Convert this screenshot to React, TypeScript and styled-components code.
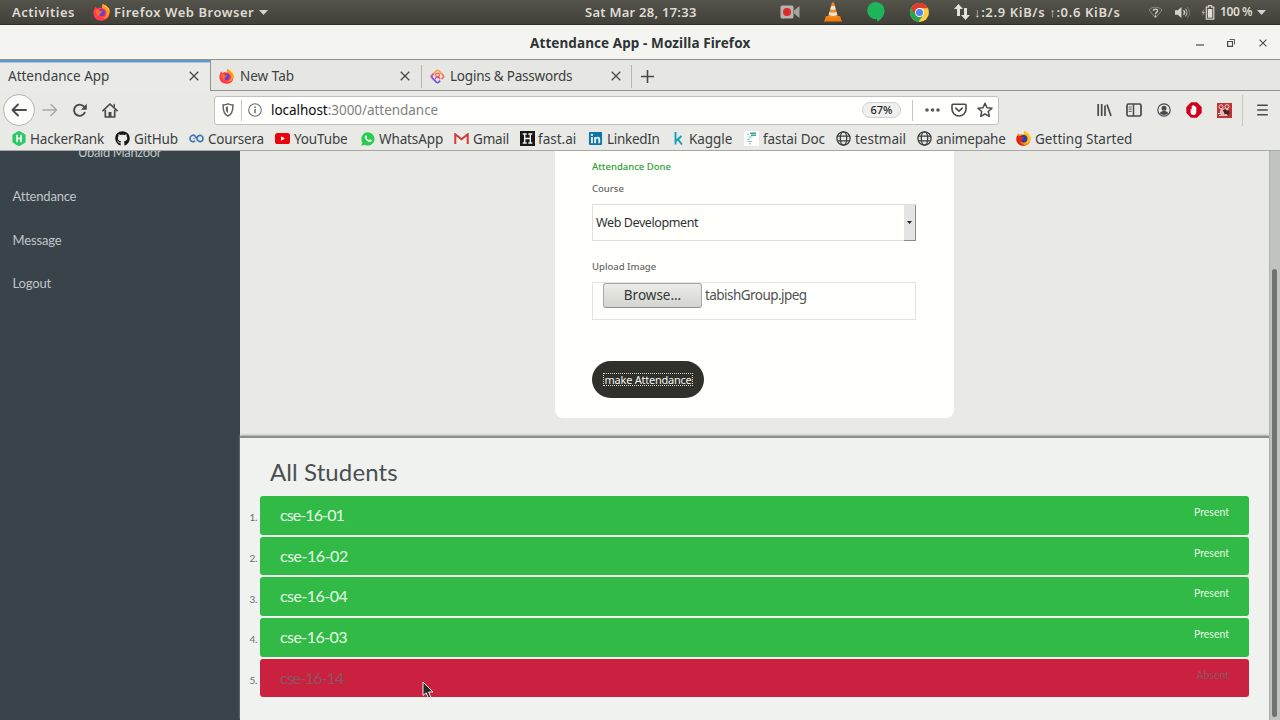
import React from "react";
import styled, { createGlobalStyle, css } from "styled-components";
import { FaGithub, FaLinkedin } from "react-icons/fa";

const Global = createGlobalStyle`
  *, *::before, *::after { box-sizing: border-box; }
  body { margin: 0; overflow: hidden; font-family: "Noto Sans", "Open Sans", sans-serif; }
  svg { display: block; flex: none; }
`;

const Screen = styled.div`
  width: 1280px;
  height: 720px;
  display: flex;
  flex-direction: column;
  overflow: hidden;
  background: #e9eae6;
`;

const Label = styled.span<{ $w?: number; $size?: number; $track?: number; $gap?: number }>`
  display: block;
  flex: none;
  white-space: pre;
  ${(p) => p.$w !== undefined && css`width: ${p.$w}px;`}
  margin-left: ${(p) => p.$gap ?? 0}px;
  font-size: ${(p) => p.$size ?? 14}px;
  letter-spacing: ${(p) => p.$track ?? 0}px;
`;

const Slot = styled.span<{ $w: number; $gap?: number }>`
  display: flex;
  flex: none;
  justify-content: center;
  align-items: center;
  width: ${(p) => p.$w}px;
  margin-left: ${(p) => p.$gap ?? 0}px;
`;

/* ---------- desktop panel ---------- */

const Panel = styled.header`
  height: 25px;
  flex: none;
  display: flex;
  align-items: center;
  color: #dfdbd2;
  font-weight: 600;
  line-height: 24px;
  background: linear-gradient(#55544b, #403f39);
  border-bottom: 1px solid #33322d;
`;

const TitleBar = styled.div`
  height: 35px;
  flex: none;
  display: flex;
  align-items: center;
  padding-top: 1px;
  color: #2e3436;
  font-weight: 700;
  background: #f4f4f1;
  border-bottom: 1px solid #92938e;
`;

/* ---------- browser chrome ---------- */

const TabStrip = styled.div`
  height: 31px;
  flex: none;
  display: flex;
  background: #e6e7e2;
  color: #3b4042;
`;

const Tab = styled.div<{ $active?: boolean; $w: number }>`
  width: ${(p) => p.$w}px;
  flex: none;
  display: flex;
  align-items: center;
  padding: 2px 0 0 8px;
  border-bottom: 1px solid #92938e;
  ${(p) =>
    p.$active &&
    css`
      background: #eaebe7;
      border-bottom: 0;
      border-top: 2px solid #6598ca;
      border-right: 1px solid #92938e;
      padding: 0 0 1px 8px;
      box-shadow: inset 0 1px #a9c4df;
    `}
`;

const TabRest = styled.div`
  flex: 1;
  display: flex;
  align-items: center;
  padding-top: 2px;
  border-bottom: 1px solid #92938e;
`;

const TabDivider = styled.span`
  width: 1px;
  height: 23px;
  background: #b5b6b2;
`;

const NavBar = styled.div`
  height: 36px;
  flex: none;
  display: flex;
  align-items: center;
  padding: 2px 0 0 3px;
  background: #e9eae6;
`;

const BackButton = styled.span`
  width: 32px;
  height: 32px;
  flex: none;
  display: flex;
  align-items: center;
  justify-content: center;
  border: 1px solid #b3b4b0;
  border-radius: 50%;
  background: #fbfbf9;
`;

const UrlBar = styled.div`
  width: 785px;
  height: 29px;
  flex: none;
  display: flex;
  align-items: center;
  margin-left: 96px;
  background: #fffffd;
  border: 1px solid #c0c1bd;
  border-radius: 3px;
`;

const Rule = styled.span<{ $gap: number; $h?: number }>`
  width: 1px;
  flex: none;
  height: ${(p) => p.$h ?? 21}px;
  margin-left: ${(p) => p.$gap}px;
  background: #c6c7c3;
`;

const Host = styled.b`
  font-weight: 400;
  color: #0c0c0d;
`;

const Url = styled(Label)`
  color: #808281;
`;

const Zoom = styled.span`
  width: 39px;
  height: 16px;
  flex: none;
  margin-left: 424px;
  border: 1px solid #d0d1cf;
  border-radius: 8px;
  background: #f0f0ee;
  color: #222;
  font-size: 11px;
  font-weight: 500;
  line-height: 14px;
  letter-spacing: 0;
  text-align: center;
`;

const Bookmarks = styled.div`
  height: 24px;
  flex: none;
  display: flex;
  padding-left: 11px;
  color: #3b4042;
  border-bottom: 1px solid #a7a8a5;
`;

const Bookmark = styled.div<{ $w: number }>`
  width: ${(p) => p.$w}px;
  flex: none;
  display: flex;
  align-items: center;
  line-height: 22px;
`;

/* ---------- page ---------- */

const Page = styled.div`
  flex: 1;
  min-height: 0;
  display: flex;
`;

const Sidebar = styled.nav`
  width: 240px;
  flex: none;
  background: #38434a;
  color: #c0c5c6;
  font-family: Lato, sans-serif;
  font-size: 13px;
  line-height: 16px;
`;

const UserName = styled.div`
  height: 9px;
  overflow: hidden;
  display: flex;
  align-items: flex-end;
  padding-left: 78px;
  letter-spacing: -0.35px;
`;

const MenuItem = styled.a<{ $top: number; $track: number }>`
  display: block;
  margin: ${(p) => p.$top}px 0 0 12.5px;
  letter-spacing: ${(p) => p.$track}px;
`;

const Main = styled.main`
  width: 1029px;
  flex: none;
  display: flex;
  flex-direction: column;
`;

const FormArea = styled.section`
  height: 285px;
  flex: none;
  background: #e9eae6;
`;

const Card = styled.form`
  width: 399px;
  height: 267px;
  margin-left: 315px;
  padding: 9px 37px 0;
  background: #fffffc;
  border-radius: 0 0 8px 8px;
`;

const FieldLabel = styled.label<{ $top: number; $green?: boolean; $track?: number }>`
  display: block;
  height: 13px;
  margin-top: ${(p) => p.$top}px;
  font-size: 9.5px;
  font-weight: 500;
  line-height: 13px;
  letter-spacing: ${(p) => p.$track ?? 0}px;
  color: ${(p) => (p.$green ? "#2f9d39" : "#666867")};
`;

const Select = styled.div`
  width: 324px;
  height: 37px;
  margin-top: 9px;
  display: flex;
  align-items: center;
  justify-content: space-between;
  padding-left: 3px;
  border: 1px solid #dededc;
  border-right: 0;
  color: #303232;
`;

const SelectButton = styled.span`
  width: 12px;
  height: 36px;
  display: flex;
  align-items: center;
  justify-content: center;
  background: #e4e5e2;
  border-right: 1px solid #8c8d8a;
  border-bottom: 1px solid #8c8d8a;
`;

const FileBox = styled.div`
  width: 324px;
  height: 38px;
  margin-top: 9px;
  display: flex;
  align-items: flex-start;
  padding-left: 10px;
  border: 1px solid #e2e2e0;
  color: #505353;
  line-height: 25px;
`;

const Browse = styled.span`
  width: 99px;
  height: 25px;
  display: flex;
  justify-content: center;
  line-height: 22px;
  color: #333839;
  border: 1px solid #a9aaa6;
  border-bottom-color: #8f908d;
  border-radius: 3px;
  background: linear-gradient(#ebebe8, #d4d5d1);
`;

const Submit = styled.span`
  width: 112px;
  height: 37px;
  margin-top: 41px;
  display: flex;
  align-items: center;
  justify-content: center;
  border-radius: 19px;
  background: #31312c;
  color: #f4f4f0;
  line-height: 11px;
`;

const FocusRing = styled.span`
  width: 90px;
  height: 13px;
  display: flex;
  justify-content: center;
  border: 1px dotted #d8d8d4;
`;

const Students = styled.section`
  flex: 1;
  position: relative;
  padding: 18px 20px 0;
  background: #f0f2f0;
  border-top: 2px solid #8b8e8b;
  box-shadow: 0 -1px 2px #a6a8a4;
  font-family: Lato, sans-serif;
`;

const Heading = styled.h1`
  margin: 0 0 8px 10px;
  height: 32px;
  font-size: 24px;
  font-weight: 400;
  line-height: 32px;
  letter-spacing: 0.1px;
  color: #4a4f50;
`;

const Entry = styled.div`
  display: flex;
  align-items: center;
  height: 38.7px;
  margin: 0 0 2px -12px;
`;

const Index = styled.span`
  width: 12px;
  flex: none;
  display: flex;
  justify-content: flex-end;
  padding: 4px 3px 0 0;
  font-size: 10px;
  line-height: 12px;
  letter-spacing: -0.3px;
  white-space: nowrap;
  color: #6a6e6e;
`;

const Row = styled.div<{ $absent?: boolean }>`
  flex: 1;
  height: 100%;
  display: flex;
  justify-content: space-between;
  padding: 0 20px;
  border-radius: 3px;
  background: ${(p) => (p.$absent ? "#ca2140" : "#32ba46")};
  color: ${(p) => (p.$absent ? "#8d5560" : "#e4f8e6")};
`;

const Roll = styled.span<{ $track: number }>`
  font-size: 16px;
  line-height: 38px;
  letter-spacing: ${(p) => p.$track}px;
`;

const Status = styled.span`
  font-size: 10.5px;
  line-height: 33.5px;
`;

const Scrollbar = styled.div`
  width: 11px;
  background: linear-gradient(90deg, #aeb0ad 1px, #c1c3c1 1px);
  padding: 118px 0 3px 3px;
`;

const Thumb = styled.div`
  width: 5px;
  height: 100%;
  border-radius: 3px;
  background: #6f726f;
`;

const Pointer = styled.div`
  position: absolute;
  left: 422px;
  top: 681px;
`;

/* ---------- icons ---------- */

const Caret = () => (
  <svg width="9" height="5" viewBox="0 0 9 5"><path d="M0 0h9L4.500 5z" fill="#d5d2c9" /></svg>
);

const Firefox = ({ size = 16, old = false }: { size?: number; old?: boolean }) => (
  <svg width={size} height={size} viewBox="0 0 16 16">
    <path d="M1 5.200 2.200 2.400 4 4.200 6 3.300 8.200 4l1-4 3.200 3.300 2 1.200C15.900 6.700 15.900 11 13.700 13.500 11 16.400 5 16.600 2.300 13.700.2 11.500 0 8 1 5.200z" fill={old ? "#ff7b16" : "#ff3b4c"} />
    <path d="M9.200 0c0 2.200 1.200 3 2.600 4 2.200 2 2.400 5.600.5 7.600 3-.7 4.200-5 2.600-7.900-.6.100-1-.3-1.300-.8C12.800 1.500 11 .9 9.200 0z" fill="#ffd53d" />
    <path d="M9 4c2.500.5 4 2.500 3.800 5-.3 2.600-2.300 4-4.500 4 3.700 1.500 7-1 7-5 0-2-.7-3.400-1.700-4.300L9.200 0C8 1.500 8 3 9 4z" fill={old ? "#ffc21b" : "#ff9c1b"} />
    <circle cx="8" cy="8.300" r={old ? 4 : 3.3} fill={old ? "#1745b5" : "#6b3fd4"} />
    <path d="M2.500 5.500c2-.8 3.400.2 4.200 1.200L9 7 7.300 8.600c-1.300.4-2 1.800-.5 2.700C3.700 12 2.100 8.600 2.500 5.500z" fill={old ? "#e6260f" : "#ff6a2b"} />
    {old && <path d="M1 5.200C0 8 .2 11.500 2.300 13.700c2 2 5.200 2.500 8 1.500C5 15 2.500 10 3 5z" fill="#dd2415" />}
  </svg>
);

const Close = ({ size = 10 }: { size?: number }) => (
  <svg width={size} height={size} viewBox="0 0 10 10" stroke="#45494a" strokeWidth="1.300"><path d="M.7.700l8.600 8.600M9.300.700.7 9.300" /></svg>
);

const Camera = () => (
  <svg width="20" height="14" viewBox="0 0 20 14">
    <rect x=".5" y=".5" width="13" height="13" rx="1.500" fill="#b5b3ae" />
    <path d="M14 5.500 19.500 1v12L14 8.500z" fill="#a5a39e" />
    <circle cx="7" cy="7" r="4" fill="#dc2a2a" />
  </svg>
);

const Cone = () => (
  <svg width="18" height="20" viewBox="0 0 18 20">
    <path d="M2 14h14l2 5.500H0z" fill="#ef7d0c" />
    <path d="M8 .5h2L14 15c-2 1.800-8 1.800-10 0z" fill="#f58a1f" />
    <path d="m7.200 4-.9 3.200c1.500.8 3.900.8 5.400 0L10.800 4zM5.600 9.800l-.8 3c2 1.500 6.400 1.500 8.400 0l-.8-3c-1.600 1.200-5.200 1.200-6.800 0z" fill="#e9e6e0" />
  </svg>
);

const Hangouts = () => (
  <svg width="18" height="20" viewBox="0 0 18 20"><path d="M9 0a8.600 8.600 0 0 1 8.600 8.600c0 5-3.600 9.400-7.600 11.200v-2.700A8.600 8.600 0 1 1 9 0z" fill="#1db45a" /></svg>
);

const Chrome = () => (
  <svg width="19" height="19" viewBox="0 0 20 20">
    <circle cx="10" cy="10" r="10" fill="#ffce43" />
    <path d="M10 10 1.340 5A10 10 0 0 0 9 19.950L14 12.300z" fill="#2ba24c" />
    <path d="M1.340 5a10 10 0 0 1 17.500.400H10L5.700 12.300z" fill="#e23b2e" />
    <circle cx="10" cy="10" r="4.700" fill="#fff" />
    <circle cx="10" cy="10" r="3.700" fill="#4a86f0" />
  </svg>
);

const UpDown = () => (
  <svg width="16" height="16" viewBox="0 0 16 16" fill="#e4e1d8"><path d="M4.500 0 9 5H6v7H3V5H0zM11.500 16 7 11h3V4h3v7h3z" /></svg>
);

const Wifi = () => (
  <svg width="15" height="13" viewBox="0 0 15 13" fill="none" stroke="#8e8b83">
    <path d="M1 4C4.500.3 10.500.3 14 4L7.500 12z" />
    <path d="M5.500 5c0-2.600 4.300-2.500 4 0-.2 1.400-2 1.300-2 3.200M7.500 9.300v1.600" stroke="#d5d2c9" strokeWidth="1.400" />
  </svg>
);

const Volume = () => (
  <svg width="15" height="13" viewBox="0 0 15 13" fill="none" stroke="#d5d2c9">
    <path d="M0 4.200h2.800L6.500 1v11L2.800 8.800H0z" fill="#d5d2c9" stroke="none" />
    <path d="M8.500 4.300c1.200 1.200 1.200 3.200 0 4.400" strokeWidth="1.300" />
    <path d="M10.300 2.600c2.200 2.200 2.200 5.600 0 7.800" stroke="#aaa79f" strokeWidth="1.200" />
    <path d="M12.200 1c3 3 3 8 0 11" stroke="#7e7c74" />
  </svg>
);

const Battery = () => (
  <svg width="14" height="15" viewBox="0 0 14 15">
    <path d="M3 4 .5 8H2l-.5 3L4 7H2.500z" fill="#aaa79f" />
    <path d="M7.500.7h3v1.500h2.300v12H5.300v-12h2.200z" fill="none" stroke="#d5d2c9" strokeWidth="1.200" />
    <path d="M6.800 4h4.500v8.700H6.800z" fill="#e0ddd4" />
  </svg>
);

const LoginsIcon = () => (
  <svg width="15" height="15" viewBox="0 0 15 15" fill="none" strokeWidth="1.700">
    <path d="M3 5.200 6.300 1.900q1.200-1.100 2.400 0L12 5.200" stroke="#ffa04a" />
    <path d="m12 5 1 1.300q1.100 1.200 0 2.400L11.500 10" stroke="#ff6a60" />
    <path d="M3.300 5 2 6.300Q.8 7.500 2 8.700l4.300 4.400q1.200 1 2.400 0l1.500-1.500" stroke="#6a55e6" />
    <path d="M3.300 5 2 6.300Q.8 7.500 2 8.700" stroke="#f0459a" />
    <circle cx="7.500" cy="6" r="1.800" stroke="#f2564b" strokeWidth="1.200" />
    <path d="M5.200 10.300c0-3 4.600-3 4.600 0" stroke="#e0487e" strokeWidth="1.200" />
  </svg>
);

const ink = "#484b4b";

const Arrow = ({ flip = false }: { flip?: boolean }) => (
  <svg width="16" height="14" viewBox="0 0 16 14" fill="none" stroke={flip ? "#a9aaa8" : ink} strokeWidth={flip ? 1.5 : 1.9} strokeLinecap="round" strokeLinejoin="round">
    <path d={flip ? "M1 7h13.500M9 1.500 14.500 7 9 12.500" : "M15 7H1.500M7 1.500 1.500 7 7 12.500"} />
  </svg>
);

const Reload = () => (
  <svg width="16" height="15" viewBox="0 0 16 15">
    <path d="M12.700 9.700A5.600 5.600 0 1 1 12 3.700" fill="none" stroke={ink} strokeWidth="1.900" strokeLinecap="round" />
    <path d="M14.800.7v6H8.900z" fill={ink} />
  </svg>
);

const Home = () => (
  <svg width="16" height="15" viewBox="0 0 16 15" fill="none" stroke={ink} strokeLinejoin="round" strokeLinecap="round">
    <path d="M1 7.700 8 1l7 6.700" strokeWidth="1.700" />
    <path d="M12.300 3.500V1.500" strokeWidth="1.400" />
    <path d="M3.300 7.500V14h9.400V7.500" strokeWidth="1.700" />
    <path d="M6.500 9h3v5h-3z" fill={ink} stroke="none" />
  </svg>
);

const Shield = () => (
  <svg width="12" height="14" viewBox="0 0 12 14" fill="none" stroke="#606363">
    <path d="M6 .9c1.700.8 3.300 1 5 1C11 7 10.300 11.200 6 13 1.700 11.200 1 7 1 1.900c1.700 0 3.300-.2 5-1z" strokeWidth="1.500" />
    <path d="M6 3.500c-.9.300-1.500.5-2.300.5.100 3.300.6 5.200 2.300 6.300z" fill="#606363" stroke="none" />
  </svg>
);

const Info = () => (
  <svg width="14" height="14" viewBox="0 0 14 14" fill="none" stroke="#6d7070">
    <circle cx="7" cy="7" r="6.300" strokeWidth="1.100" />
    <path d="M7 6v4.300M7 3.500v1.400" strokeWidth="1.500" />
  </svg>
);

const Dots = () => (
  <svg width="15" height="4" viewBox="0 0 15 4" fill="#58595a"><circle cx="2" cy="2" r="1.800" /><circle cx="7.500" cy="2" r="1.800" /><circle cx="13" cy="2" r="1.800" /></svg>
);

const Pocket = () => (
  <svg width="16" height="14" viewBox="0 0 16 14" fill="none" stroke={ink} strokeWidth="1.600" strokeLinecap="round" strokeLinejoin="round">
    <path d="M2 1.200h12q1 0 1 1V6a7 7 0 0 1-14 0V2.200q0-1 1-1z" />
    <path d="m4.700 5.200 3.300 3 3.300-3" />
  </svg>
);

const Star = () => (
  <svg width="16" height="16" viewBox="0 0 16 16" fill="none" stroke={ink} strokeWidth="1.500" strokeLinejoin="round">
    <path d="m8 1.200 2 4.500 5 .5-3.700 3.300 1 4.900L8 12l-4.300 2.400 1-4.900L1 6.200l5-.5z" />
  </svg>
);

const Library = () => (
  <svg width="15" height="14" viewBox="0 0 15 14" stroke={ink} strokeWidth="1.700"><path d="M1.200 1v12M4.700 1v12M8 2.500V13M10 1.500 14 13" /></svg>
);

const SidebarIcon = () => (
  <svg width="16" height="14" viewBox="0 0 16 14" fill="none" stroke={ink}>
    <rect x="1" y="1" width="14" height="12" rx="1.500" strokeWidth="1.700" />
    <path d="M7.500 1v12" strokeWidth="1.500" /><path d="M2.700 4h3M2.700 6.200h3M2.700 8.400h3" strokeWidth=".9" />
  </svg>
);

const Account = () => (
  <svg width="14" height="14" viewBox="0 0 14 14">
    <circle cx="7" cy="7" r="6.200" fill="none" stroke={ink} strokeWidth="1.200" />
    <circle cx="7" cy="5.200" r="2.500" fill={ink} /><path d="M2.800 10.300c1-2 2.500-2.300 4.200-2.300s3.200.3 4.200 2.300C9.300 12.600 4.700 12.600 2.800 10.300z" fill={ink} />
  </svg>
);

const Blocker = () => (
  <svg width="16" height="16" viewBox="0 0 16 16">
    <path d="M5 .3h6L15.700 5v6L11 15.700H5L.3 11V5z" fill="#d0021b" />
    <path d="M4.600 7.200q.7-.4 1.100.3V4q.6-.7 1.100 0v-.8q.6-.6 1.200 0v.8q.6-.7 1.200 0v1q.6-.7 1.100 0v4.500c0 2.500-1 3.500-2.700 3.500-2 0-2.700-1-3-2.300z" fill="#fff" />
  </svg>
);

const RedAddon = () => (
  <svg width="15" height="15" viewBox="0 0 15 15">
    <rect width="15" height="15" fill="#bf3436" />
    <circle cx="4" cy="3.800" r="2" fill="none" stroke="#edcfcc" /><circle cx="10" cy="3.600" r="2" fill="none" stroke="#edcfcc" />
    <path d="M3 7c2-2 7-2 9 0v4l-2 2H5l-2-2.500z" fill="#e8b8b4" />
    <path d="M5.500 7.500 8 6l2 1.500 2.500-.5L12 9l1.500 2-2-.2.500 2.200-3-2.200-1.500.7L7 9z" fill="#46201f" />
    <path d="M1 10.500h3M2 12.500h3" stroke="#f1d8d6" />
  </svg>
);

const Menu = () => (
  <svg width="11" height="12" viewBox="0 0 11 12" stroke={ink} strokeWidth="1.600" strokeLinecap="round"><path d="M.8 1.200h9.400M.8 6h9.400M.8 10.800h9.400" /></svg>
);

const HackerRank = () => (
  <svg width="14" height="15" viewBox="0 0 14 15">
    <path d="M7 0q.5 0 1 .3l5 2.900q.6.300.6 1v6.600q0 .7-.6 1L8 14.700q-1 .5-2 0l-5-2.900q-.6-.3-.6-1V4.200q0-.7.600-1L6 .3q.5-.3 1-.3z" fill="#2ec866" />
    <path d="M5 3.800v7.400M9 3.800v7.400M5 7.500h4" stroke="#fff" strokeWidth="1.500" />
  </svg>
);

const Coursera = () => (
  <svg width="15" height="9" viewBox="0 0 15 9" fill="none" strokeWidth="1.700">
    <path d="M6 6.700C4.500 8.500 1 7.800 1 4.500S4.700.4 6.200 2.200L9 6.500c1.500 2 5 1.200 5-2S10.500.5 9 2.300L7.800 4" stroke="#3c77b5" />
    <path d="M4 4.500q2 .5 2.800-1" stroke="#6ea3d4" strokeWidth="1" />
  </svg>
);

const Youtube = () => (
  <svg width="15" height="11" viewBox="0 0 15 11"><rect width="15" height="11" rx="2.600" fill="#e8050b" /><path d="m6 3.200 4 2.300-4 2.300z" fill="#fff" /></svg>
);

const WhatsAppIcon = () => (
  <svg width="14" height="14" viewBox="0 0 14 14">
    <path d="M7 .3a6.600 6.600 0 1 1-3.200 12.400L.4 13.700l1-3.300A6.600 6.600 0 0 1 7 .3z" fill="#27ce4d" />
    <path d="M4.600 3.500c.8-.5 1 .3 1.400 1.300.1.600-.5.700-.4 1.200.6 1.100 1.400 1.700 2.400 2.100.5 0 .7-.9 1.200-.8l1.500.8c.2 1-.8 1.900-1.800 1.900C6.500 9.800 3.800 7.300 3.700 5c0-.6.400-1.200.9-1.500z" fill="#fff" />
  </svg>
);

const Gmail = () => (
  <svg width="15" height="11" viewBox="0 0 15 11">
    <rect x="1" y=".5" width="13" height="10" fill="#f2eceb" />
    <path d="M1.300 11V1.300l6.200 5 6.200-5V11" fill="none" stroke="#cf3c36" strokeWidth="2" />
  </svg>
);

const FastAi = () => (
  <svg width="15" height="15" viewBox="0 0 15 15">
    <rect width="15" height="15" fill="#191919" />
    <path d="M2.700 3h4M8.300 3h4M2.700 12h4M8.300 12h4M4.700 3v9M10.300 3v9M4.700 7.500h5.600" stroke="#f2f2f0" strokeWidth="1.400" fill="none" />
  </svg>
);

const Kaggle = () => (
  <svg width="9" height="13" viewBox="0 0 9 13" fill="none" stroke="#189fb8" strokeWidth="1.900"><path d="M1.500 0v12.500M7.500 4 2 9M3.800 7.200 8 12.500" /></svg>
);

const FastaiDoc = () => (
  <svg width="15" height="15" viewBox="0 0 15 15">
    <rect width="15" height="15" fill="#fdfdfb" />
    <path d="M6 2.200h6M7 4.200h5" stroke="#3aa796" strokeWidth="1.500" />
    <path d="M3 3.200h2M4.500 6h4M3 8.300h3M3.500 10.500h4.500M5 12.800h2" stroke="#7cc5b8" strokeWidth="1.100" />
  </svg>
);

const Globe = () => (
  <svg width="15" height="15" viewBox="0 0 15 15" fill="none" stroke="#3c3f3f" strokeWidth="1.300">
    <circle cx="7.500" cy="7.500" r="6.600" /><ellipse cx="7.500" cy="7.500" rx="3.200" ry="6.600" /><path d="M1.300 5.200h12.400M1.300 9.800h12.400" />
  </svg>
);

const bookmarks: { name: string; w: number; track: number; gap?: number; icon: React.ReactNode }[] = [
  { name: "HackerRank", w: 104, track: -0.2, icon: <HackerRank /> },
  { name: "GitHub", w: 74, track: -0.15, icon: <FaGithub size={15} color="#16181a" /> },
  { name: "Coursera", w: 86, track: -0.2, icon: <Coursera /> },
  { name: "YouTube", w: 85, track: -0.15, icon: <Youtube /> },
  { name: "WhatsApp", w: 94, track: -0.12, icon: <WhatsAppIcon /> },
  { name: "Gmail", w: 66, track: -0.2, icon: <Gmail /> },
  { name: "fast.ai", w: 68, track: 0, gap: 3, icon: <FastAi /> },
  { name: "LinkedIn", w: 83, track: -0.3, icon: <FaLinkedin size={15} color="#0b76ad" /> },
  { name: "Kaggle", w: 73, track: -0.05, gap: 3, icon: <Kaggle /> },
  { name: "fastai Doc", w: 92, track: -0.07, icon: <FastaiDoc /> },
  { name: "testmail", w: 81, track: 0, icon: <Globe /> },
  { name: "animepahe", w: 99, track: -0.2, icon: <Globe /> },
  { name: "Getting Started", w: 130, track: 0.02, icon: <Firefox size={15} old /> },
];

const students = [
  { roll: "cse-16-01", status: "Present", track: -0.9 },
  { roll: "cse-16-02", status: "Present", track: -0.48 },
  { roll: "cse-16-04", status: "Present", track: -0.53 },
  { roll: "cse-16-03", status: "Present", track: -0.56 },
  { roll: "cse-16-14", status: "Absent", track: -0.98 },
];

export default function App() {
  return (
    <Screen>
      <Global />
      <Panel>
        <Label $gap={12} $w={81} $size={13} $track={0.5}>Activities</Label>
        <Slot $w={17}><Firefox size={17} /></Slot>
        <Label $gap={4} $w={145} $size={13} $track={0.52}>Firefox Web Browser</Label>
        <Caret />
        <Label $gap={317} $w={195} $size={13} $track={0.25}>Sat Mar 28, 17:33</Label>
        <Slot $w={20}><Camera /></Slot>
        <Slot $w={18} $gap={24}><Cone /></Slot>
        <Slot $w={18} $gap={25}><Hangouts /></Slot>
        <Slot $w={19} $gap={25}><Chrome /></Slot>
        <Slot $w={16} $gap={25}><UpDown /></Slot>
        <Label $gap={4} $w={174} $size={13} $track={0.64}>↓:2.9 KiB/s ↑:0.6 KiB/s</Label>
        <Slot $w={15}><Wifi /></Slot>
        <Slot $w={15} $gap={12}><Volume /></Slot>
        <Slot $w={14} $gap={11}><Battery /></Slot>
        <Label $gap={5} $w={37} $size={12} $track={-0.4}>100 %</Label>
        <Caret />
      </Panel>

      <TitleBar>
        <Label $gap={530} $w={666} $size={13.5} $track={0.09}>Attendance App - Mozilla Firefox</Label>
        <svg width="8" height="12" viewBox="0 0 8 12" stroke={ink} strokeWidth="1.200"><path d="M0 8h8" /></svg>
        <Slot $w={8} $gap={23}>
          <svg width="8" height="8" viewBox="0 0 8 8" fill="none" stroke={ink}><path d="M.6 2.500h4.900v4.900H.6z" strokeWidth="1.200" /><path d="M2.500.5h5v5" strokeWidth=".9" /></svg>
        </Slot>
        <Slot $w={8} $gap={24}><Close size={8} /></Slot>
      </TitleBar>

      <TabStrip>
        <Tab $active $w={211}>
          <Label $w={181} $size={13.5}>Attendance App</Label>
          <Close />
        </Tab>
        <Tab $w={210}>
          <Slot $w={15}><Firefox size={15} /></Slot>
          <Label $gap={6} $w={160} $size={13.5}>New Tab</Label>
          <Close />
        </Tab>
        <TabRest>
          <TabDivider />
          <Slot $w={15} $gap={8}><LoginsIcon /></Slot>
          <Label $gap={5} $w={161} $size={13.5} $track={-0.22}>Logins &amp; Passwords</Label>
          <Close />
          <Slot $w={1} $gap={10}><TabDivider /></Slot>
          <Slot $w={13} $gap={9}>
            <svg width="13" height="13" viewBox="0 0 13 13" stroke={ink} strokeWidth="1.600"><path d="M6.500 0v13M0 6.500h13" /></svg>
          </Slot>
        </TabRest>
      </TabStrip>

      <NavBar>
        <BackButton><Arrow /></BackButton>
        <Slot $w={16} $gap={7}><Arrow flip /></Slot>
        <Slot $w={16} $gap={14}><Reload /></Slot>
        <Slot $w={16} $gap={14}><Home /></Slot>
        <UrlBar>
          <Slot $w={12} $gap={7}><Shield /></Slot>
          <Rule $gap={7} />
          <Slot $w={14} $gap={6}><Info /></Slot>
          <Url $gap={9} $w={167} $size={13.5} $track={-0.04}><Host>localhost</Host>:3000/attendance</Url>
          <Zoom>67%</Zoom>
          <Rule $gap={11} />
          <Slot $w={15} $gap={12}><Dots /></Slot>
          <Slot $w={16} $gap={11}><Pocket /></Slot>
          <Slot $w={16} $gap={10}><Star /></Slot>
        </UrlBar>
        <Slot $w={15} $gap={98}><Library /></Slot>
        <Slot $w={16} $gap={14}><SidebarIcon /></Slot>
        <Slot $w={14} $gap={15}><Account /></Slot>
        <Slot $w={16} $gap={15}><Blocker /></Slot>
        <Slot $w={15} $gap={15}><RedAddon /></Slot>
        <Rule $gap={10} $h={31} />
        <Slot $w={11} $gap={14}><Menu /></Slot>
      </NavBar>

      <Bookmarks>
        {bookmarks.map((b) => (
          <Bookmark key={b.name} $w={b.w}>
            <Slot $w={15}>{b.icon}</Slot>
            <Label $gap={b.gap ?? 4} $size={13.5} $track={b.track}>{b.name}</Label>
          </Bookmark>
        ))}
      </Bookmarks>

      <Page>
        <Sidebar>
          <UserName>Ubaid Manzoor</UserName>
          <MenuItem $top={28} $track={-0.2}>Attendance</MenuItem>
          <MenuItem $top={28} $track={-0.15}>Message</MenuItem>
          <MenuItem $top={27} $track={-0.15}>Logout</MenuItem>
        </Sidebar>
        <Main>
          <FormArea>
            <Card>
              <FieldLabel $top={0} $green>Attendance Done</FieldLabel>
              <FieldLabel $top={9}>Course</FieldLabel>
              <Select>
                <Label $size={12.5} $track={-0.4}>Web Development</Label>
                <SelectButton>
                  <svg width="5" height="3" viewBox="0 0 5 3"><path d="M0 0h5L2.500 3z" fill="#222" /></svg>
                </SelectButton>
              </Select>
              <FieldLabel $top={19}>Upload Image</FieldLabel>
              <FileBox>
                <Browse><Label $size={13.5}>Browse…</Label></Browse>
                <Label $gap={3} $size={13.5} $track={-0.55}>tabishGroup.jpeg</Label>
              </FileBox>
              <Submit><FocusRing><Label $size={11} $track={-0.25}>make Attendance</Label></FocusRing></Submit>
            </Card>
          </FormArea>
          <Students>
            <Heading>All Students</Heading>
            {students.map((s, i) => (
              <Entry key={s.roll}>
                <Index>{i + 1}.</Index>
                <Row $absent={s.status === "Absent"}>
                  <Roll $track={s.track}>{s.roll}</Roll>
                  <Status>{s.status}</Status>
                </Row>
              </Entry>
            ))}
          </Students>
        </Main>
        <Scrollbar><Thumb /></Scrollbar>
      </Page>

      <Pointer>
        <svg width="12" height="18" viewBox="0 0 12 18"><path d="M1 1v13.500l3.200-2.700L6.500 17l2.300-1-2.300-5H11z" fill="#2b2822" stroke="#efe9e6" strokeWidth="1" /></svg>
      </Pointer>
    </Screen>
  );
}
